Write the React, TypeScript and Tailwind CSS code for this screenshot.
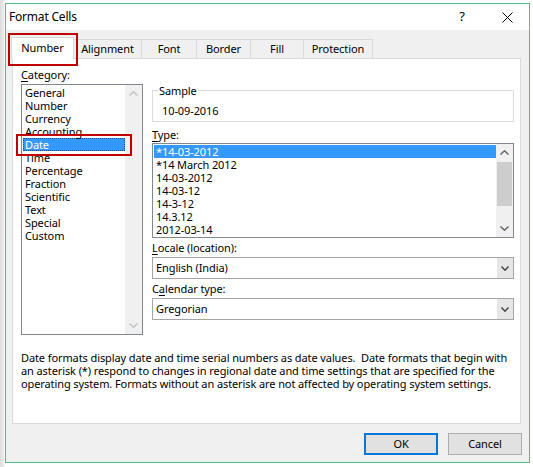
import React from "react";

function Chev({ dir, color, w = 9, h = 5 }: { dir: "up" | "down"; color: string; w?: number; h?: number }) {
  const d = dir === "up" ? `M0.5 ${h - 0.5} L${w / 2} 0.8 L${w - 0.5} ${h - 0.5}` : `M0.5 0.5 L${w / 2} ${h - 0.8} L${w - 0.5} 0.5`;
  return (
    <svg width={w} height={h} viewBox={`0 0 ${w} ${h}`}>
      <path d={d} fill="none" stroke={color} strokeWidth="1.4" />
    </svg>
  );
}

function Select({ value }: { value: string }) {
  return (
    <div className="h-[22px] border border-[#a5a5a5] flex bg-white">
      <div className="flex-1 pl-[3px] leading-[20px]">{value}</div>
      <div className="w-[16px] bg-[#e6e6e6] flex items-center justify-center">
        <Chev dir="down" color="#404040" w={8} h={5} />
      </div>
    </div>
  );
}

export default function App() {
  const cats = ["General", "Number", "Currency", "Accounting", "Date", "Time", "Percentage", "Fraction", "Scientific", "Text", "Special", "Custom"];
  const types = ["*14-03-2012", "*14 March 2012", "14-03-2012", "14-03-12", "14-3-12", "14.3.12", "2012-03-14"];
  return (
    <div className="w-[533px] h-[467px] pt-[3px] pl-[5px] font-['Noto_Sans',sans-serif] text-[11px] tracking-[-0.1px] text-black bg-[linear-gradient(to_right,#dcdcdc,#ededed_4px,#ffffff_5px)]">
      <div className="w-[525px] h-[460px] border border-[#4cc08c] bg-[#f0f0f0] flex flex-col relative">
        {/* Title bar */}
        <div className="h-[26px] bg-white flex items-center pl-[3px] pr-[7px] shrink-0">
          <span className="text-[12px] tracking-[-0.2px]">Format Cells</span>
          <div className="ml-auto flex items-center gap-[15px]">
            <span className="w-[30px] text-center text-[13px]">?</span>
            <span className="w-[30px] flex justify-center">
              <svg width="11" height="11" viewBox="0 0 11 11">
                <path d="M0.5 0.5 L10.5 10.5 M10.5 0.5 L0.5 10.5" stroke="#000" strokeWidth="1" />
              </svg>
            </span>
          </div>
        </div>

        {/* Body */}
        <div className="flex-1 pl-[6px] pr-[8px] flex flex-col">
          {/* Tabs */}
          <div className="h-[28px] flex items-end ml-[-1px] shrink-0">
            <div className="w-[63px] h-[22px] mb-[-1px] relative z-10 bg-white border-l border-t border-r border-[#d9d9d9] flex items-center justify-center pb-[1px]">Number</div>
            <div className="w-[68px] h-[19px] border-t border-r border-[#d9d9d9] flex items-center justify-center">Alignment</div>
            <div className="w-[55px] h-[19px] border-t border-r border-[#d9d9d9] flex items-center justify-center">Font</div>
            <div className="w-[54px] h-[19px] border-t border-r border-[#d9d9d9] flex items-center justify-center">Border</div>
            <div className="w-[53px] h-[19px] border-t border-r border-[#d9d9d9] flex items-center justify-center">Fill</div>
            <div className="w-[69px] h-[19px] border-t border-r border-[#d9d9d9] flex items-center justify-center">Protection</div>
          </div>

          {/* Panel */}
          <div className="h-[366px] border border-[#d9d9d9] bg-white flex flex-col shrink-0">
            <div className="flex pl-[8px] pr-[6px]">
              {/* Category */}
              <div className="w-[122px] pt-[9px]">
                <div className="h-[14px] leading-[14px]">
                  <u className="underline-offset-2">C</u>ategory:
                </div>
                <div className="mt-[2px] h-[251px] border border-[#828790] flex">
                  <div className="flex-1 pt-[1px] pl-[1px]">
                    {cats.map((c) => (
                      <div
                        key={c}
                        className={
                          c === "Date"
                            ? "h-[13px] leading-[11px] pl-[1px] bg-[#3399ff] text-white border border-dotted border-[#1b4f86]"
                            : "h-[13px] leading-[13px] pl-[2px]"
                        }
                      >
                        {c}
                      </div>
                    ))}
                  </div>
                  <div className="w-[17px] bg-[#f0f0f0] flex flex-col justify-between">
                    <div className="h-[17px] flex items-center justify-center">
                      <Chev dir="up" color="#c2c2c2" />
                    </div>
                    <div className="h-[17px] flex items-center justify-center">
                      <Chev dir="down" color="#c2c2c2" />
                    </div>
                  </div>
                </div>
              </div>

              {/* Right column */}
              <div className="ml-[9px] w-[362px] pt-[31px]">
                <div className="h-[32px] border border-[#dcdcdc] relative pl-[9px] pt-[13px]">
                  <span className="absolute top-[-7px] left-[5px] px-[1px] bg-white leading-[14px]">Sample</span>
                  <div className="leading-[14px]">10-09-2016</div>
                </div>
                <div className="mt-[6px] h-[14px] leading-[14px]">
                  <u className="underline-offset-2">T</u>ype:
                </div>
                <div className="mt-[1px] h-[95px] border border-[#828790] flex">
                  <div className="flex-1 pt-[1px] pl-[1px]">
                    {types.map((t, i) => (
                      <div
                        key={t}
                        className={i === 0 ? "h-[13px] leading-[13px] pl-[2px] bg-[#3399ff] text-white" : "h-[13px] leading-[13px] pl-[2px]"}
                      >
                        {t}
                      </div>
                    ))}
                  </div>
                  <div className="w-[17px] bg-[#f0f0f0] flex flex-col">
                    <div className="h-[17px] flex items-center justify-center">
                      <Chev dir="up" color="#606060" />
                    </div>
                    <div className="mt-[1px] h-[44px] mx-[1px] bg-[#cdcdcd]" />
                    <div className="mt-auto h-[17px] flex items-center justify-center">
                      <Chev dir="down" color="#606060" />
                    </div>
                  </div>
                </div>
                <div className="mt-[3px] h-[14px] leading-[14px]">
                  <u className="underline-offset-2">L</u>ocale (location):
                </div>
                <div className="mt-[2px]">
                  <Select value="English (India)" />
                </div>
                <div className="mt-[3px] h-[14px] leading-[14px]">
                  C<u className="underline-offset-2">a</u>lendar type:
                </div>
                <div className="mt-[2px]">
                  <Select value="Gregorian" />
                </div>
              </div>
            </div>

            <div className="mt-[16px] pl-[8px] leading-[13px] whitespace-pre">
              {"Date formats display date and time serial numbers as date values.  Date formats that begin with\nan asterisk (*) respond to changes in regional date and time settings that are specified for the\noperating system. Formats without an asterisk are not affected by operating system settings."}
            </div>
          </div>

          {/* Buttons */}
          <div className="mt-[9px] flex justify-end gap-[10px] mr-[-1px]">
            <button className="w-[74px] h-[22px] border-2 border-[#0078d7] bg-[#e1e1e1] leading-[18px]">OK</button>
            <button className="w-[74px] h-[22px] border border-[#adadad] bg-[#e1e1e1] leading-[20px]">Cancel</button>
          </div>
        </div>

        {/* Red highlight boxes */}
        <div className="absolute left-[2px] top-[29px] w-[70px] h-[33px] border-2 border-[#c00000] z-20" />
        <div className="absolute left-[10px] top-[130px] w-[116px] h-[22px] border-2 border-[#c00000] z-20" />
      </div>
    </div>
  );
}
